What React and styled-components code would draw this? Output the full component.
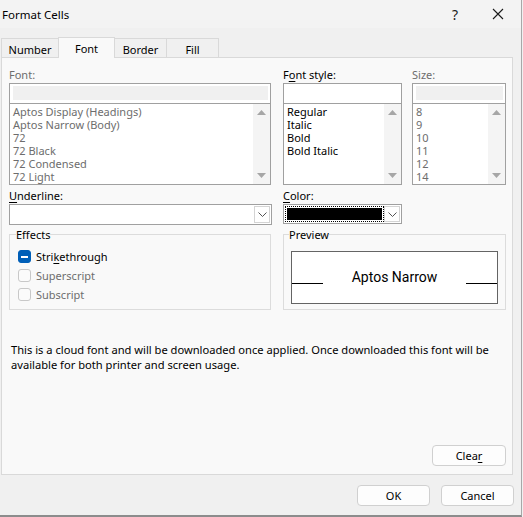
import styled, { createGlobalStyle } from 'styled-components';

const GlobalStyle = createGlobalStyle`
  html, body {
    margin: 0;
    padding: 0;
    background: #f0f0f0;
  }
  body {
    font-family: "Noto Sans", "Open Sans", sans-serif;
    font-size: 11px;
    line-height: 15px;
    color: #000;
  }
`;

const Window = styled.div`
  width: 522px;
  height: 517px;
  box-sizing: border-box;
  display: flex;
  flex-direction: column;
  background: #f0f0f0;
  border-right: 1px solid #a8a8a8;
  border-bottom: 2px solid #8c8c8c;
`;

const TitleBar = styled.div`
  height: 28px;
  display: flex;
  align-items: center;
  padding-left: 2px;
  background: #f3f3f3;
`;

const Title = styled.span`
  flex: 1;
  font-size: 11.5px;
`;

const CaptionButton = styled.div`
  width: ${(p) => p.$w}px;
  height: 28px;
  display: flex;
  align-items: center;
  justify-content: center;
  font-size: 14px;
  color: #1a1a1a;
`;

const TabStrip = styled.div`
  height: 29px;
  display: flex;
  align-items: flex-end;
  padding-left: 1px;
`;

const Tab = styled.div`
  position: relative;
  width: ${(p) => p.$w}px;
  height: ${(p) => (p.$active ? 21 : 19)}px;
  margin-bottom: ${(p) => (p.$active ? -1 : 0)}px;
  margin-left: -1px;
  box-sizing: border-box;
  display: flex;
  align-items: center;
  justify-content: center;
  padding-top: ${(p) => (p.$active ? 0 : 2)}px;
  border: 1px solid #d9d9d9;
  border-bottom: none;
  background: ${(p) => (p.$active ? '#f9f9f9' : '#f0f0f0')};
  z-index: ${(p) => (p.$active ? 1 : 0)};
  &:first-child {
    margin-left: 0;
  }
`;

const Panel = styled.div`
  width: 512px;
  height: 418px;
  margin-left: 1px;
  box-sizing: border-box;
  border: 1px solid #d9d9d9;
  background: #f9f9f9;
  padding: 9px 6px 8px 7px;
  display: flex;
  flex-direction: column;
`;

const Row = styled.div`
  display: flex;
  margin-top: ${(p) => p.$top || 0}px;
`;

const Field = styled.div`
  width: ${(p) => p.$w}px;
  margin-left: ${(p) => p.$gap || 0}px;
  display: flex;
  flex-direction: column;
`;

const Label = styled.div`
  height: 15px;
  margin-bottom: 1px;
  color: ${(p) => (p.$disabled ? '#6d6d6d' : '#000')};
`;

const Key = styled.span`
  text-decoration: underline;
  text-underline-offset: 2px;
`;

const EditBox = styled.div`
  height: 21px;
  box-sizing: border-box;
  border: 1px solid #a0a0a0;
  background: #fff;
  padding: 2px 2px 3px 3px;
`;

const DisabledFill = styled.div`
  height: 100%;
  background: #f0f0f0;
`;

const ListBox = styled.div`
  height: 82px;
  margin-top: -1px;
  box-sizing: border-box;
  border: 1px solid #a0a0a0;
  background: #fff;
  display: flex;
`;

const Items = styled.div`
  flex: 1;
  padding: 1px 0 0 3px;
  overflow: hidden;
  line-height: 13px;
  color: ${(p) => (p.$disabled ? '#6d6d6d' : '#000')};
`;

const Item = styled.div`
  white-space: nowrap;
  height: 13px;
`;

const ScrollBar = styled.div`
  width: 17px;
  display: flex;
  flex-direction: column;
  justify-content: space-between;
  background: #f4f4f4;
`;

const ScrollArrow = styled.div`
  height: 17px;
  display: flex;
  align-items: center;
  justify-content: center;
`;

const Arrow = ({ down }) => (
  <svg width="9" height="5" viewBox="0 0 9 5">
    <path d={down ? 'M0 0H9L4.5 5Z' : 'M0 5H9L4.5 0Z'} fill="#a6a6a6" />
  </svg>
);

const List = ({ items, disabled }) => (
  <ListBox>
    <Items $disabled={disabled}>
      {items.map((t) => (
        <Item key={t}>{t}</Item>
      ))}
    </Items>
    <ScrollBar>
      <ScrollArrow>
        <Arrow />
      </ScrollArrow>
      <ScrollArrow>
        <Arrow down />
      </ScrollArrow>
    </ScrollBar>
  </ListBox>
);

const Combo = styled.div`
  height: ${(p) => p.$h}px;
  box-sizing: border-box;
  border: 1px solid #a0a0a0;
  background: #fff;
  display: flex;
  padding: 1px;
`;

const ComboValue = styled.div`
  flex: 1;
`;

const Swatch = styled.div`
  flex: 1;
  border: 1px dotted #000;
  padding: 1px;
  display: flex;
`;

const SwatchFill = styled.div`
  flex: 1;
  background: #000;
`;

const DropButton = styled.div`
  width: 16px;
  box-sizing: border-box;
  border: 1px solid #d4d4d4;
  display: flex;
  align-items: center;
  justify-content: center;
`;

const Chevron = () => (
  <svg width="9" height="5" viewBox="0 0 9 5">
    <path d="M0.5 0.5L4.5 4.5L8.5 0.5" fill="none" stroke="#555" strokeWidth="1" />
  </svg>
);

const Group = styled.fieldset`
  margin: 0;
  min-width: 0;
  width: ${(p) => p.$w}px;
  margin-left: ${(p) => p.$gap || 0}px;
  box-sizing: border-box;
  border: 1px solid #dcdcdc;
  padding: 5px 7px 2px ${(p) => p.$pl}px;
`;

const Legend = styled.legend`
  padding: 0;
  margin-left: -2px;
  line-height: 15px;
`;

const CheckRow = styled.div`
  height: 19px;
  display: flex;
  align-items: center;
  gap: 5px;
  color: ${(p) => (p.$disabled ? '#6d6d6d' : '#000')};
`;

const CheckBox = styled.div`
  width: 13px;
  height: 13px;
  box-sizing: border-box;
  border-radius: 3px;
  display: flex;
  align-items: center;
  justify-content: center;
  background: ${(p) => (p.$on ? '#005fb8' : '#fbfbfb')};
  border: 1px solid ${(p) => (p.$on ? '#005fb8' : '#c8c8c8')};
`;

const Dash = styled.span`
  width: 7px;
  height: 2px;
  background: #fff;
`;

const PreviewBox = styled.div`
  height: 53px;
  margin: 4px 0 3px;
  box-sizing: border-box;
  border: 1px solid #646464;
  background: #fff;
  display: grid;
  grid-template-columns: 31px 1fr 31px;
  align-items: center;
`;

const PreviewLine = styled.span`
  align-self: start;
  margin-top: 31px;
  border-top: 1px solid #000;
`;

const PreviewText = styled.span`
  text-align: center;
  font-family: Roboto, "Noto Sans", sans-serif;
  font-size: 14px;
`;

const Info = styled.p`
  margin: 32px 0 0 2px;
  width: 496px;
  font-size: 11.15px;
`;

const Button = styled.div`
  width: ${(p) => p.$w}px;
  height: 21px;
  box-sizing: border-box;
  border: 1px solid #d0d0d0;
  border-radius: 4px;
  background: #fdfdfd;
  display: flex;
  align-items: center;
  justify-content: center;
`;

const ClearButton = styled(Button)`
  margin-top: auto;
  align-self: flex-end;
`;

const Footer = styled.div`
  display: flex;
  justify-content: flex-end;
  gap: 11px;
  padding: 10px 7px 0 0;
`;

const CloseIcon = () => (
  <svg width="12" height="12" viewBox="0 0 12 12">
    <path d="M1 1L11 11M11 1L1 11" stroke="#1a1a1a" strokeWidth="1.1" />
  </svg>
);

const fonts = [
  'Aptos Display (Headings)',
  'Aptos Narrow (Body)',
  '72',
  '72 Black',
  '72 Condensed',
  '72 Light',
];
const styles = ['Regular', 'Italic', 'Bold', 'Bold Italic'];
const sizes = ['8', '9', '10', '11', '12', '14'];

export default function App() {
  return (
    <>
      <GlobalStyle />
      <Window>
        <TitleBar>
          <Title>Format Cells</Title>
          <CaptionButton $w={40}>?</CaptionButton>
          <CaptionButton $w={46}>
            <CloseIcon />
          </CaptionButton>
        </TitleBar>
        <TabStrip>
          <Tab $w={58}>Number</Tab>
          <Tab $w={57} $active>Font</Tab>
          <Tab $w={53}>Border</Tab>
          <Tab $w={53}>Fill</Tab>
        </TabStrip>
        <Panel>
          <Row>
            <Field $w={262}>
              <Label $disabled>Font:</Label>
              <EditBox>
                <DisabledFill />
              </EditBox>
              <List items={fonts} disabled />
            </Field>
            <Field $w={119} $gap={12}>
              <Label>
                F<Key>o</Key>nt style:
              </Label>
              <EditBox />
              <List items={styles} />
            </Field>
            <Field $w={94} $gap={10}>
              <Label $disabled>Size:</Label>
              <EditBox>
                <DisabledFill />
              </EditBox>
              <List items={sizes} disabled />
            </Field>
          </Row>
          <Row $top={3}>
            <Field $w={263}>
              <Label>
                <Key>U</Key>nderline:
              </Label>
              <Combo $h={21}>
                <ComboValue />
                <DropButton>
                  <Chevron />
                </DropButton>
              </Combo>
            </Field>
            <Field $w={119} $gap={11}>
              <Label>
                <Key>C</Key>olor:
              </Label>
              <Combo $h={20}>
                <Swatch>
                  <SwatchFill />
                </Swatch>
                <DropButton>
                  <Chevron />
                </DropButton>
              </Combo>
            </Field>
          </Row>
          <Row $top={2}>
            <Group $w={262} $pl={8}>
              <Legend>Effects</Legend>
              <CheckRow>
                <CheckBox $on>
                  <Dash />
                </CheckBox>
                <span>
                  Stri<Key>k</Key>ethrough
                </span>
              </CheckRow>
              <CheckRow $disabled>
                <CheckBox />
                <span>Superscript</span>
              </CheckRow>
              <CheckRow $disabled>
                <CheckBox />
                <span>Subscript</span>
              </CheckRow>
            </Group>
            <Group $w={223} $gap={12} $pl={7}>
              <Legend>Preview</Legend>
              <PreviewBox>
                <PreviewLine />
                <PreviewText>Aptos Narrow</PreviewText>
                <PreviewLine />
              </PreviewBox>
            </Group>
          </Row>
          <Info>
            This is a cloud font and will be downloaded once applied. Once downloaded this font will be available for
            both printer and screen usage.
          </Info>
          <ClearButton $w={74}>
            Clea<Key>r</Key>
          </ClearButton>
        </Panel>
        <Footer>
          <Button $w={73}>OK</Button>
          <Button $w={73}>Cancel</Button>
        </Footer>
      </Window>
    </>
  );
}
